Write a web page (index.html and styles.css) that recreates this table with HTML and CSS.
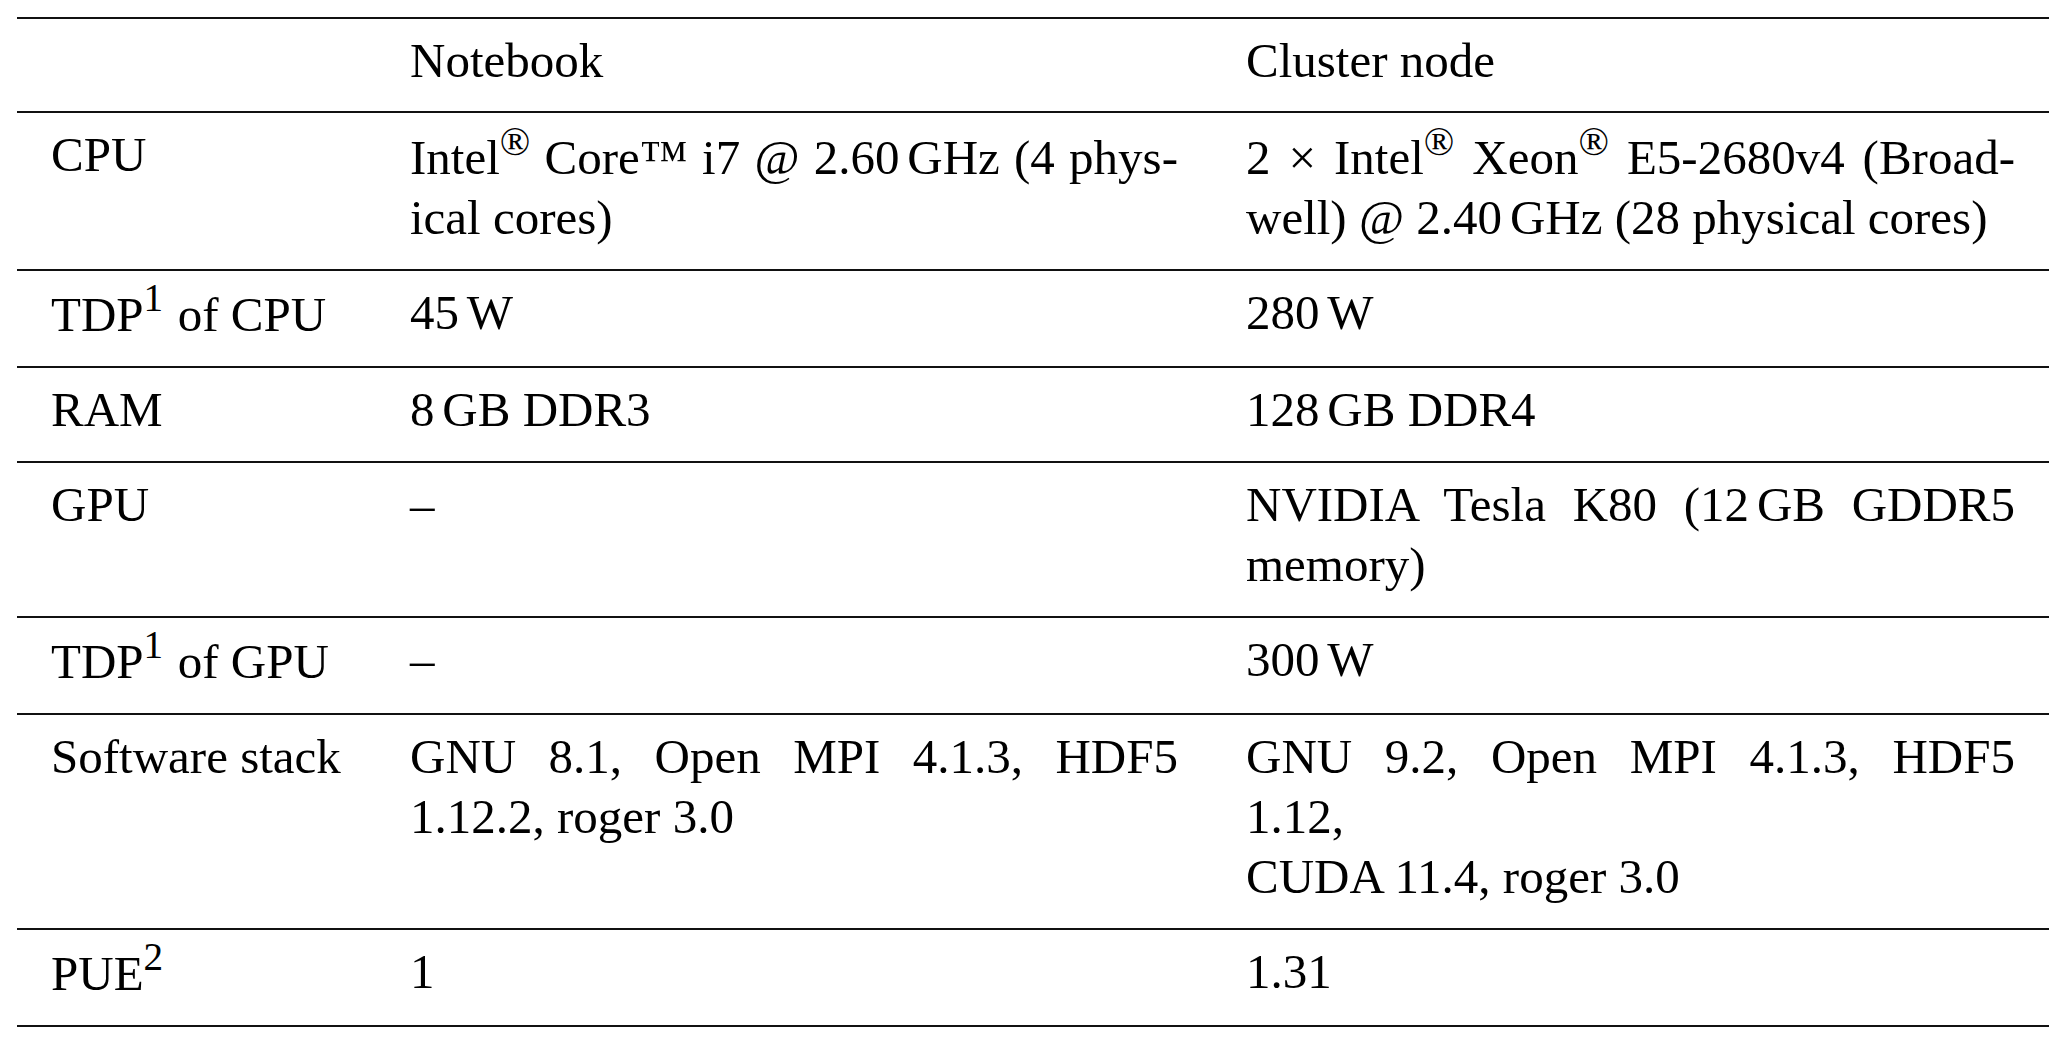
FILE: index.html
```html
<!DOCTYPE html>
<html lang="en">
<head>
<meta charset="utf-8">
<title>Hardware comparison</title>
<link rel="stylesheet" href="styles.css">
</head>
<body>
<div class="page">
  <table class="spec">
    <colgroup>
      <col class="c1">
      <col class="c2">
      <col class="c3">
    </colgroup>
    <thead>
      <tr>
        <th></th>
        <th>Notebook</th>
        <th>Cluster node</th>
      </tr>
    </thead>
    <tbody>
      <tr>
        <td>CPU</td>
        <td>
          <div class="jl">Intel<sup class="reg">®</sup> Core™ i7 @ 2.60<span class="ts"></span>GHz (4 phys-</div>
          <div>ical cores)</div>
        </td>
        <td>
          <div class="jl">2 × Intel<sup class="reg">®</sup> Xeon<sup class="reg">®</sup> E5-2680v4 (Broad-</div>
          <div>well) @ 2.40<span class="ts"></span>GHz (28 physical cores)</div>
        </td>
      </tr>
      <tr>
        <td>TDP<sup class="fn">1</sup> of CPU</td>
        <td>45<span class="ts"></span>W</td>
        <td>280<span class="ts"></span>W</td>
      </tr>
      <tr>
        <td>RAM</td>
        <td>8<span class="ts"></span>GB DDR3</td>
        <td>128<span class="ts"></span>GB DDR4</td>
      </tr>
      <tr>
        <td>GPU</td>
        <td>–</td>
        <td>
          <div class="jl">NVIDIA Tesla K80 (12<span class="ts"></span>GB GDDR5</div>
          <div>memory)</div>
        </td>
      </tr>
      <tr>
        <td>TDP<sup class="fn">1</sup> of GPU</td>
        <td>–</td>
        <td>300<span class="ts"></span>W</td>
      </tr>
      <tr>
        <td>Software stack</td>
        <td>
          <div class="jl">GNU 8.1, Open MPI 4.1.3, HDF5</div>
          <div>1.12.2, roger 3.0</div>
        </td>
        <td>
          <div class="jl">GNU 9.2, Open MPI 4.1.3, HDF5</div>
          <div>1.12,</div>
          <div>CUDA 11.4, roger 3.0</div>
        </td>
      </tr>
      <tr>
        <td>PUE<sup class="fn">2</sup></td>
        <td>1</td>
        <td>1.31</td>
      </tr>
    </tbody>
  </table>
</div>
</body>
</html>
```

FILE: styles.css
```css
html, body {
  margin: 0;
  background: #ffffff;
}

body {
  color: #000000;
  font-family: "Liberation Serif", "Times New Roman", serif;
  font-size: 49px;
}

.page {
  padding: 17px 18px 0 17px;
}

.spec {
  width: 2032px;
  table-layout: fixed;
  border-collapse: separate;
  border-spacing: 0;
}

.c1 { width: 359px; }
.c2 { width: 836px; }
.c3 { width: 837px; }

.spec th,
.spec td {
  padding: 12px 34px 21px;
  border-top: 2px solid #111;
  text-align: left;
  vertical-align: top;
  font-weight: normal;
  line-height: 60px;
}

.spec th {
  padding-bottom: 20px;
}

.spec tbody tr:last-child td {
  border-bottom: 2px solid #111;
}

.spec td:first-child {
  white-space: nowrap;
}

.jl {
  text-align: justify;
  text-align-last: justify;
}

.ts {
  display: inline-block;
  width: 0.16em;
}

.fn {
  font-size: 0.8em;
  line-height: 0.75;
  vertical-align: 20px;
  margin-right: 0.06em;
}

.reg {
  font-size: 0.82em;
  line-height: 0.85;
  vertical-align: 19px;
}
```
